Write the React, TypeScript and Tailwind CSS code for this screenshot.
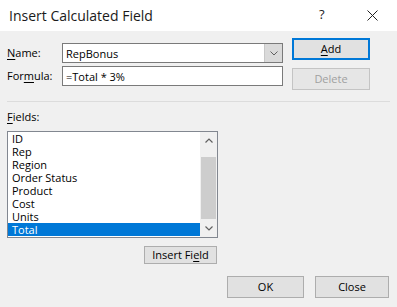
import React from "react";

const font = { fontFamily: '"Open Sans", "Noto Sans", sans-serif' };

function Btn({ children, className = "" }: { children: React.ReactNode; className?: string }) {
  return (
    <div className={`flex items-center justify-center bg-[#e1e1e1] border border-[#adadad] text-[11px] text-black ${className}`}>
      {children}
    </div>
  );
}

export default function App() {
  const items = ["ID", "Rep", "Region", "Order Status", "Product", "Cost", "Units", "Total"];
  return (
    <div className="w-[397px] h-[307px] bg-[#f0f0f0] text-[11px] text-black overflow-hidden" style={font}>
      {/* title bar */}
      <div className="h-[31px] bg-white flex items-center">
        <div className="pl-[9px] text-[14px] text-[#1a1a1a] flex-1 pb-[1px]">Insert Calculated Field</div>
        <div className="w-[14px] text-[13px] text-[#222] pb-[2px]">?</div>
        <div className="ml-[33px] mr-[19px] w-[12px] flex items-center justify-center">
          <svg width="11" height="11" viewBox="0 0 11 11">
            <path d="M0.5 0.5 L10.5 10.5 M10.5 0.5 L0.5 10.5" stroke="#222" strokeWidth="1" />
          </svg>
        </div>
      </div>

      {/* top section */}
      <div className="flex pl-[7px] pt-[7px]">
        <div className="flex flex-col mt-[5px]">
          <div className="flex items-center h-[20px]">
            <div className="w-[55px]"><span className="underline underline-offset-2">N</span>ame:</div>
            <div className="w-[221px] h-[20px] bg-white border border-[#7a7a7a] flex items-center">
              <div className="flex-1 pl-[3px] leading-none">RepBonus</div>
              <div className="w-[18px] h-[18px] bg-[#dadada] border-l border-[#c8c8c8] flex items-center justify-center">
                <svg width="8" height="5" viewBox="0 0 8 5">
                  <path d="M0.5 0.5 L4 4 L7.5 0.5" stroke="#606060" strokeWidth="1" fill="none" />
                </svg>
              </div>
            </div>
          </div>
          <div className="flex items-center h-[20px] mt-[3px]">
            <div className="w-[55px]">For<span className="underline underline-offset-2">m</span>ula:</div>
            <div className="w-[221px] h-[20px] bg-white border border-[#7a7a7a] flex items-center pl-[3px] leading-none">
              =Total * 3%
            </div>
          </div>
        </div>
        <div className="flex flex-col ml-[9px]">
          <Btn className="w-[78px] h-[22px] !border-2 !border-[#0078d7]">
            <span><span className="underline underline-offset-2">A</span>dd</span>
          </Btn>
          <Btn className="w-[78px] h-[22px] mt-[8px] !bg-[#e6e6e6] !border-[#c4c4c4] !text-[#a0a0a0]">Delete</Btn>
        </div>
      </div>

      {/* separator */}
      <div className="ml-[7px] mr-[7px] mt-[11px] h-px bg-[#dcdcdc]" />

      {/* fields */}
      <div className="pl-[7px] mt-[7px] leading-[15px]">
        <span className="underline underline-offset-2">F</span>ields:
      </div>
      <div className="ml-[7px] mt-[7px] w-[211px] h-[107px] border border-[#828790] bg-white flex">
        <div className="flex-1 flex flex-col">
          {items.map((it) => (
            <div
              key={it}
              className={`h-[13px] leading-[13px] pl-[4px] ${it === "Total" ? "bg-[#0078d7] text-white" : ""}`}
            >
              {it}
            </div>
          ))}
        </div>
        <div className="w-[17px] bg-[#f0f0f0] flex flex-col items-center">
          <div className="h-[17px] flex items-center justify-center">
            <svg width="8" height="5" viewBox="0 0 8 5">
              <path d="M0.5 4.5 L4 1 L7.5 4.5" stroke="#606060" strokeWidth="1.2" fill="none" />
            </svg>
          </div>
          <div className="w-[15px] h-[62px] bg-[#cdcdcd] mt-[8px]" />
          <div className="flex-1 flex items-center justify-center">
            <svg width="8" height="5" viewBox="0 0 8 5">
              <path d="M0.5 0.5 L4 4 L7.5 0.5" stroke="#606060" strokeWidth="1.2" fill="none" />
            </svg>
          </div>
        </div>
      </div>

      <div className="flex pl-[144px] mt-[8px]">
        <Btn className="w-[73px] h-[18px]">
          <span>Insert Fi<span className="underline underline-offset-2">e</span>ld</span>
        </Btn>
      </div>

      <div className="flex pl-[227px] mt-[12px]">
        <Btn className="w-[77px] h-[22px]">OK</Btn>
        <Btn className="w-[74px] h-[22px] ml-[11px]">Close</Btn>
      </div>
    </div>
  );
}
